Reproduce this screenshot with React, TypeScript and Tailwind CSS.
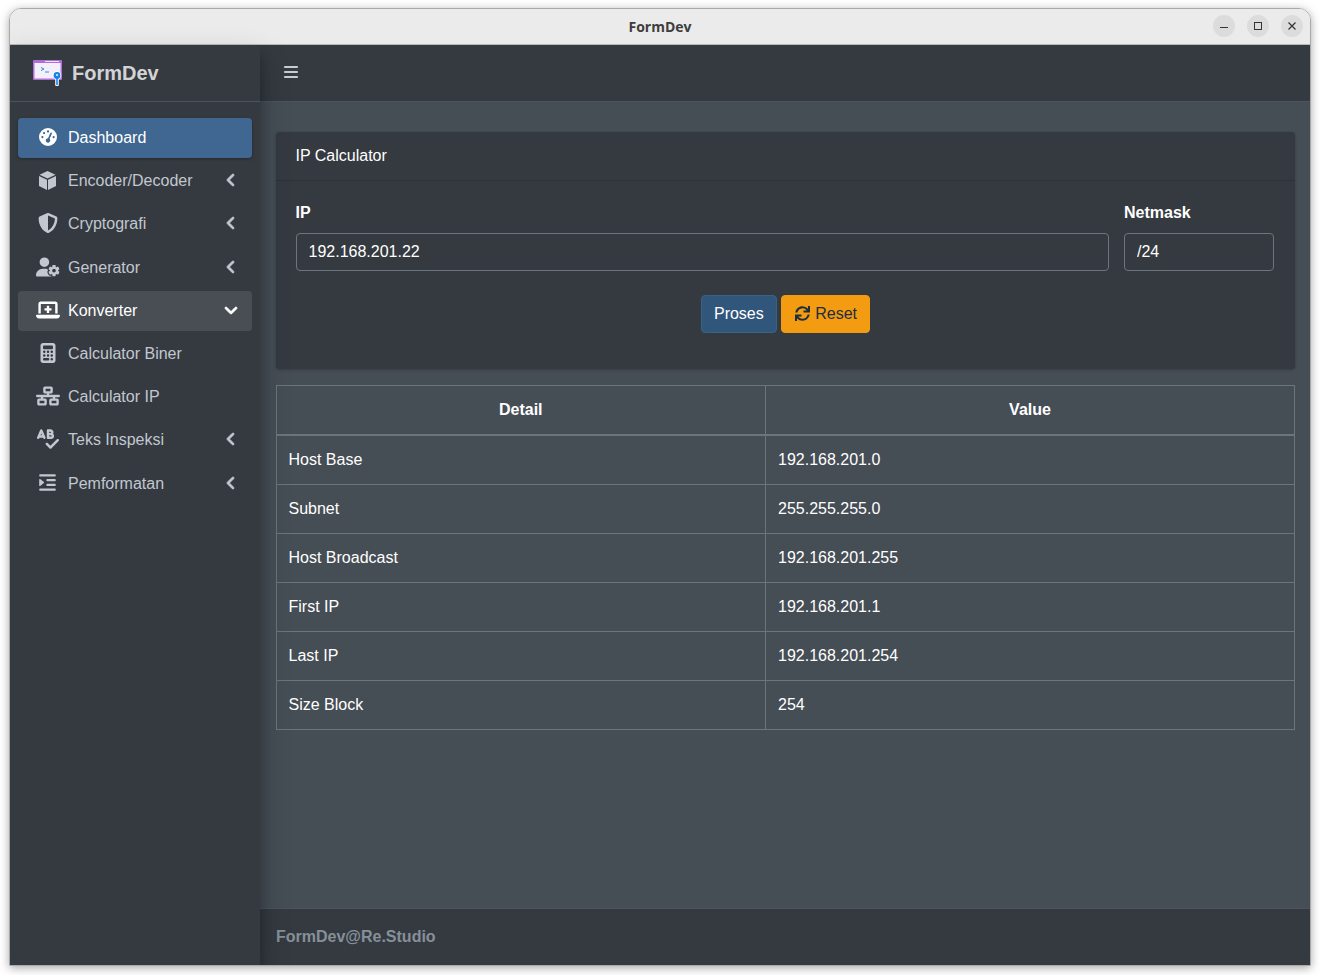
import type { ReactNode } from 'react';
import { FaSync } from 'react-icons/fa';
import {
  FaAngleDown,
  FaAngleLeft,
  FaBars,
  FaCalculator,
  FaGaugeHigh,
  FaIndent,
  FaLaptopMedical,
  FaNetworkWired,
  FaShieldHalved,
  FaSpellCheck,
  FaUserGear,
} from 'react-icons/fa6';

const rows = [
  ['Host Base', '192.168.201.0'],
  ['Subnet', '255.255.255.0'],
  ['Host Broadcast', '192.168.201.255'],
  ['First IP', '192.168.201.1'],
  ['Last IP', '192.168.201.254'],
  ['Size Block', '254'],
];

function NavItem({
  icon,
  label,
  state,
  arrow,
}: {
  icon: ReactNode;
  label: string;
  state?: 'active' | 'open';
  arrow?: 'left' | 'down';
}) {
  let color = 'text-[#c2c7d0]';
  if (state === 'active') color = 'bg-[#3f6791] text-white shadow-[0_1px_3px_rgba(0,0,0,0.3)]';
  if (state === 'open') color = 'bg-[#494e54] text-white';

  return (
    <div className={`flex h-10 items-center rounded pl-[17px] pr-[13px] ${color}`}>
      <span className="flex w-[25px] justify-center pb-[2px]">{icon}</span>
      <span className="ml-2 flex-1 text-base leading-6">{label}</span>
      {arrow && (
        <span className="flex w-4 justify-center pb-[2px]">
          {arrow === 'left' ? (
            <FaAngleLeft className="stroke-[30] text-base" />
          ) : (
            <FaAngleDown className="stroke-[30] text-base" />
          )}
        </span>
      )}
    </div>
  );
}

function CubeIcon() {
  return (
    <svg width="17" height="19" viewBox="0 0 17 19" fill="currentColor">
      <path d="M8.5 0l8 3.8-8 3.7-8-3.7z" />
      <path d="M0 5l8 3.7V19l-8-4z" />
      <path d="M17 5L9 8.7V19l8-4z" />
    </svg>
  );
}

function Logo() {
  return (
    <svg width="32" height="30" viewBox="0 0 32 30" className="shrink-0">
      <rect x="1" y="2" width="29" height="20" rx="1" fill="#b06fd8" />
      <rect x="2.5" y="5" width="26" height="15.5" fill="#f4f0fb" />
      <rect x="13" y="3" width="14" height="1" fill="#efe3fa" />
      <path d="M9 9.5l3 1.5-3 1.5" fill="none" stroke="#2a8fdc" strokeWidth="1" />
      <path d="M13 14h4" stroke="#2a8fdc" strokeWidth="1" />
      <rect x="23.2" y="19" width="3.6" height="9" rx="1" fill="#fff" />
      <circle cx="25" cy="17.5" r="4.2" fill="#fff" />
      <circle cx="25" cy="17.5" r="3.4" fill="#1683e6" />
      <circle cx="25" cy="17" r="1" fill="#e8f4ff" />
      <rect x="24.2" y="20" width="1.6" height="7" fill="#1683e6" />
    </svg>
  );
}

export default function App() {
  return (
    <div className="h-[975px] w-[1320px] bg-white px-[9px] pt-2 font-['Liberation_Sans',Arial,sans-serif]">
      <div className="flex h-[958px] flex-col overflow-hidden rounded-t-xl border border-[#a9a9a9] shadow-[0_2px_10px_rgba(0,0,0,0.35)]">
        {/* Title bar */}
        <div className="flex h-9 shrink-0 items-center border-b border-[#b9b9b9] bg-[#ebebeb] px-[7px] pb-[2px]">
          <div className="flex-1" />
          <div className="pt-[2px] font-['Open_Sans',sans-serif] text-sm font-bold text-[#3d3d3d]">FormDev</div>
          <div className="flex flex-1 justify-end gap-3">
            <div className="flex h-[22px] w-[22px] items-center justify-center rounded-full bg-[#dcdcdc]">
              <div className="mt-[4px] h-px w-2 bg-[#333]" />
            </div>
            <div className="flex h-[22px] w-[22px] items-center justify-center rounded-full bg-[#dcdcdc]">
              <div className="h-2 w-2 border border-[#333]" />
            </div>
            <div className="flex h-[22px] w-[22px] items-center justify-center rounded-full bg-[#dcdcdc]">
              <svg width="10" height="10" viewBox="0 0 10 10">
                <path d="M1.5 1.5l7 7M8.5 1.5l-7 7" stroke="#333" strokeWidth="1.2" />
              </svg>
            </div>
          </div>
        </div>

        <div className="flex min-h-0 flex-1">
          {/* Sidebar */}
          <aside className="relative z-10 flex w-[250px] shrink-0 flex-col bg-[#343a40] shadow-[0_14px_28px_rgba(0,0,0,0.25),0_10px_10px_rgba(0,0,0,0.22)]">
            <div className="flex h-[57px] items-center gap-2 border-b border-[#4b545c] pb-px pl-[22px]">
              <Logo />
              <span className="text-xl font-bold text-[rgba(255,255,255,0.8)]">FormDev</span>
            </div>
            <nav className="flex flex-col gap-[3.2px] px-2 pt-4">
              <NavItem icon={<FaGaugeHigh className="text-[18px]" />} label="Dashboard" state="active" />
              <NavItem icon={<CubeIcon />} label="Encoder/Decoder" arrow="left" />
              <NavItem icon={<FaShieldHalved className="text-[20px]" />} label="Cryptografi" arrow="left" />
              <NavItem icon={<FaUserGear className="text-[24px]" />} label="Generator" arrow="left" />
              <NavItem icon={<FaLaptopMedical className="text-[24px]" />} label="Konverter" state="open" arrow="down" />
              <NavItem icon={<FaCalculator className="text-[20px]" />} label="Calculator Biner" />
              <NavItem icon={<FaNetworkWired className="text-[24px]" />} label="Calculator IP" />
              <NavItem icon={<FaSpellCheck className="text-[22px]" />} label="Teks Inspeksi" arrow="left" />
              <NavItem icon={<FaIndent className="text-[19px]" />} label="Pemformatan" arrow="left" />
            </nav>
          </aside>

          {/* Main */}
          <div className="flex min-w-0 flex-1 flex-col bg-[#454d55]">
            <header className="flex h-[57px] shrink-0 items-center border-b border-[#4b545c] bg-[#343a40] pb-[2px] pl-[23px] text-[#c8cbcf]">
              <FaBars className="text-base" />
            </header>

            <main className="flex-1 pl-[15.5px] pr-[15px] pt-[30px] text-white">
              <section className="h-[237px] rounded bg-[#343a40] shadow-[0_0_1px_rgba(0,0,0,0.125),0_1px_3px_rgba(0,0,0,0.2)]">
                <div className="flex h-[49px] items-center border-b border-[rgba(0,0,0,0.125)] px-5 text-base">IP Calculator</div>
                <div className="pl-5 pr-[21px] pt-5">
                  <div className="flex gap-[15px]">
                    <label className="flex-1">
                      <div className="mb-2 text-base font-bold leading-6">IP</div>
                      <input
                        readOnly
                        value="192.168.201.22"
                        className="h-[38px] w-full rounded border border-[#6c757d] bg-[#343a40] px-3 text-base text-white outline-none"
                      />
                    </label>
                    <label className="w-[150px]">
                      <div className="mb-2 text-base font-bold leading-6">Netmask</div>
                      <input
                        readOnly
                        value="/24"
                        className="h-[38px] w-full rounded border border-[#6c757d] bg-[#343a40] px-3 text-base text-white outline-none"
                      />
                    </label>
                  </div>
                  <div className="mt-6 flex justify-center gap-1 pl-[1.5px]">
                    <button className="h-[38px] rounded border border-[#3a6186] bg-[#31567c] px-3 text-base text-white">Proses</button>
                    <button className="flex h-[38px] items-center gap-[5.5px] rounded border border-[#f39c12] bg-[#f39c12] pl-[13px] pr-3 text-base text-[#1f2d3d]">
                      <FaSync className="mb-[2px] text-[15px]" />
                      Reset
                    </button>
                  </div>
                </div>
              </section>

              <table className="mt-4 w-full table-fixed border-collapse text-base">
                <thead>
                  <tr className="h-[49px]">
                    <th className="w-[489.5px] border border-b-2 border-[#6c757d] px-3 font-bold">Detail</th>
                    <th className="border border-b-2 border-[#6c757d] px-3 font-bold">Value</th>
                  </tr>
                </thead>
                <tbody>
                  {rows.map(([detail, value], i) => (
                    <tr key={detail} className={i === 0 ? 'h-[50px]' : 'h-[49px]'}>
                      <td className="border border-[#6c757d] px-3">{detail}</td>
                      <td className="border border-[#6c757d] px-3">{value}</td>
                    </tr>
                  ))}
                </tbody>
              </table>
            </main>

            <footer className="flex h-[57px] shrink-0 items-center border-t border-[#4b545c] bg-[#343a40] px-4 text-base font-bold text-[#869099]">
              FormDev@Re.Studio
            </footer>
          </div>
        </div>
      </div>
    </div>
  );
}
